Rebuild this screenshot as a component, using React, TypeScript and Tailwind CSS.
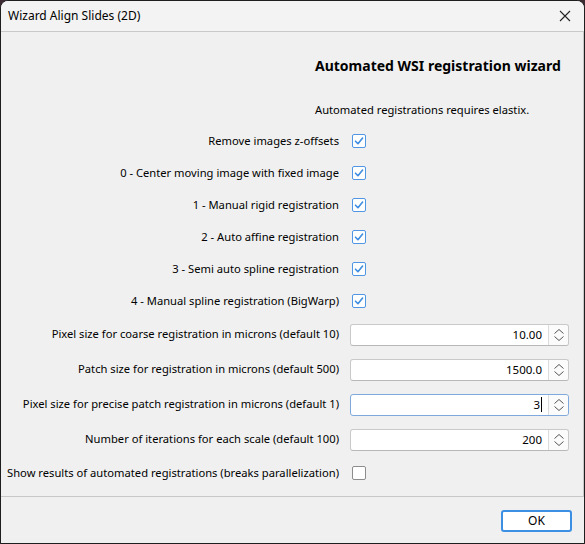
import React from "react";

const font = { fontFamily: '"Noto Sans", "Segoe UI", sans-serif' };

function Check({ checked }: { checked: boolean }) {
  if (!checked) {
    return (
      <div className="ml-[13px] w-[14px] h-[14px] rounded-[2px] border border-[#8c8c8c] bg-white" />
    );
  }
  return (
    <div className="ml-[13px] w-[14px] h-[14px] rounded-[2px] border border-[#4f97e3] bg-white flex items-center justify-center">
      <svg width="10" height="10" viewBox="0 0 10 10">
        <path d="M1.5 5.2 L4 7.7 L8.6 2" fill="none" stroke="#3f8de0" strokeWidth="1.6" strokeLinecap="round" strokeLinejoin="round" />
      </svg>
    </div>
  );
}

function Spinner({ value, focused }: { value: string; focused?: boolean }) {
  return (
    <div
      className={
        "ml-[11px] w-[219px] h-[22px] rounded-[3px] border bg-white flex " +
        (focused ? "border-[#7fa9dc]" : "border-[#c9c9c9] border-b-[#b8b8b8]")
      }
    >
      <div className="flex-1 flex items-center justify-end pr-[6px] text-[11.5px] text-black">
        <span>{value}</span>
        {focused && <span className="ml-[1px] w-px h-[15px] bg-black" />}
      </div>
      <div className="w-[20px] border-l border-[#dcdcdc] bg-[#fbfbfb] rounded-r-[3px] flex items-center justify-center">
        <svg width="12" height="14" viewBox="0 0 12 14">
          <path d="M1.5 5.5 L6 1.5 L10.5 5.5" fill="none" stroke="#555" strokeWidth="1" />
          <path d="M1.5 8.5 L6 12.5 L10.5 8.5" fill="none" stroke="#555" strokeWidth="1" />
        </svg>
      </div>
    </div>
  );
}

const checkRows = [
  "Remove images z-offsets",
  "0 - Center moving image with fixed image",
  "1 - Manual rigid registration",
  "2 - Auto affine registration",
  "3 - Semi auto spline registration",
  "4 - Manual spline registration (BigWarp)",
];

const spinRows: { label: string; value: string; focused?: boolean }[] = [
  { label: "Pixel size for coarse registration in microns (default 10)", value: "10.00" },
  { label: "Patch size for registration in microns (default 500)", value: "1500.0" },
  { label: "Pixel size for precise patch registration in microns (default 1)", value: "3", focused: true },
  { label: "Number of iterations for each scale (default 100)", value: "200" },
];

export default function App() {
  return (
    <div className="w-[585px] h-[544px] bg-[#3b2a31]" style={font}>
      <div className="w-[585px] h-[544px] flex flex-col bg-[#f0f0f0] border border-[#1e1e1e] rounded-t-[8px] overflow-hidden text-black">
        <div className="h-[31px] shrink-0 bg-[#f3f3f3] border-b border-[#c9c9c9] flex items-center justify-between pl-[7px] pr-[13px]">
          <span className="text-[12px]">Wizard Align Slides (2D)</span>
          <svg width="12" height="12" viewBox="0 0 12 12">
            <path d="M1 1 L11 11 M11 1 L1 11" stroke="#222" strokeWidth="1.1" />
          </svg>
        </div>
        <div className="h-[465px] shrink-0 border-b border-r border-[#c8c8c8] flex flex-col">
          <div className="pl-[314px] pt-[23px] h-[45px] text-[14px] font-bold whitespace-nowrap">
            Automated WSI registration wizard
          </div>
          <div className="pl-[314px] mt-[25px] h-[16px] leading-[16px] text-[11.2px] whitespace-nowrap">
            Automated registrations requires elastix.
          </div>
          <div className="mt-[7px] grid grid-cols-[338px_1fr] text-[11.2px] whitespace-nowrap">
            {checkRows.map((l) => (
              <React.Fragment key={l}>
                <div className="h-[32px] flex items-center justify-end">{l}</div>
                <div className="h-[32px] flex items-center">
                  <Check checked />
                </div>
              </React.Fragment>
            ))}
            {spinRows.map((r) => (
              <React.Fragment key={r.label}>
                <div className="h-[35px] flex items-center justify-end">{r.label}</div>
                <div className="h-[35px] flex items-center">
                  <Spinner value={r.value} focused={r.focused} />
                </div>
              </React.Fragment>
            ))}
            <div className="h-[32px] flex items-center justify-end">
              Show results of automated registrations (breaks parallelization)
            </div>
            <div className="h-[32px] flex items-center">
              <Check checked={false} />
            </div>
          </div>
        </div>
        <div className="flex-1 flex justify-end items-start pt-[13px] pr-[12px]">
          <button className="w-[71px] h-[22px] rounded-[3px] border-2 border-[#3d8fe3] bg-white text-[12px] flex items-center justify-center">
            OK
          </button>
        </div>
      </div>
    </div>
  );
}
